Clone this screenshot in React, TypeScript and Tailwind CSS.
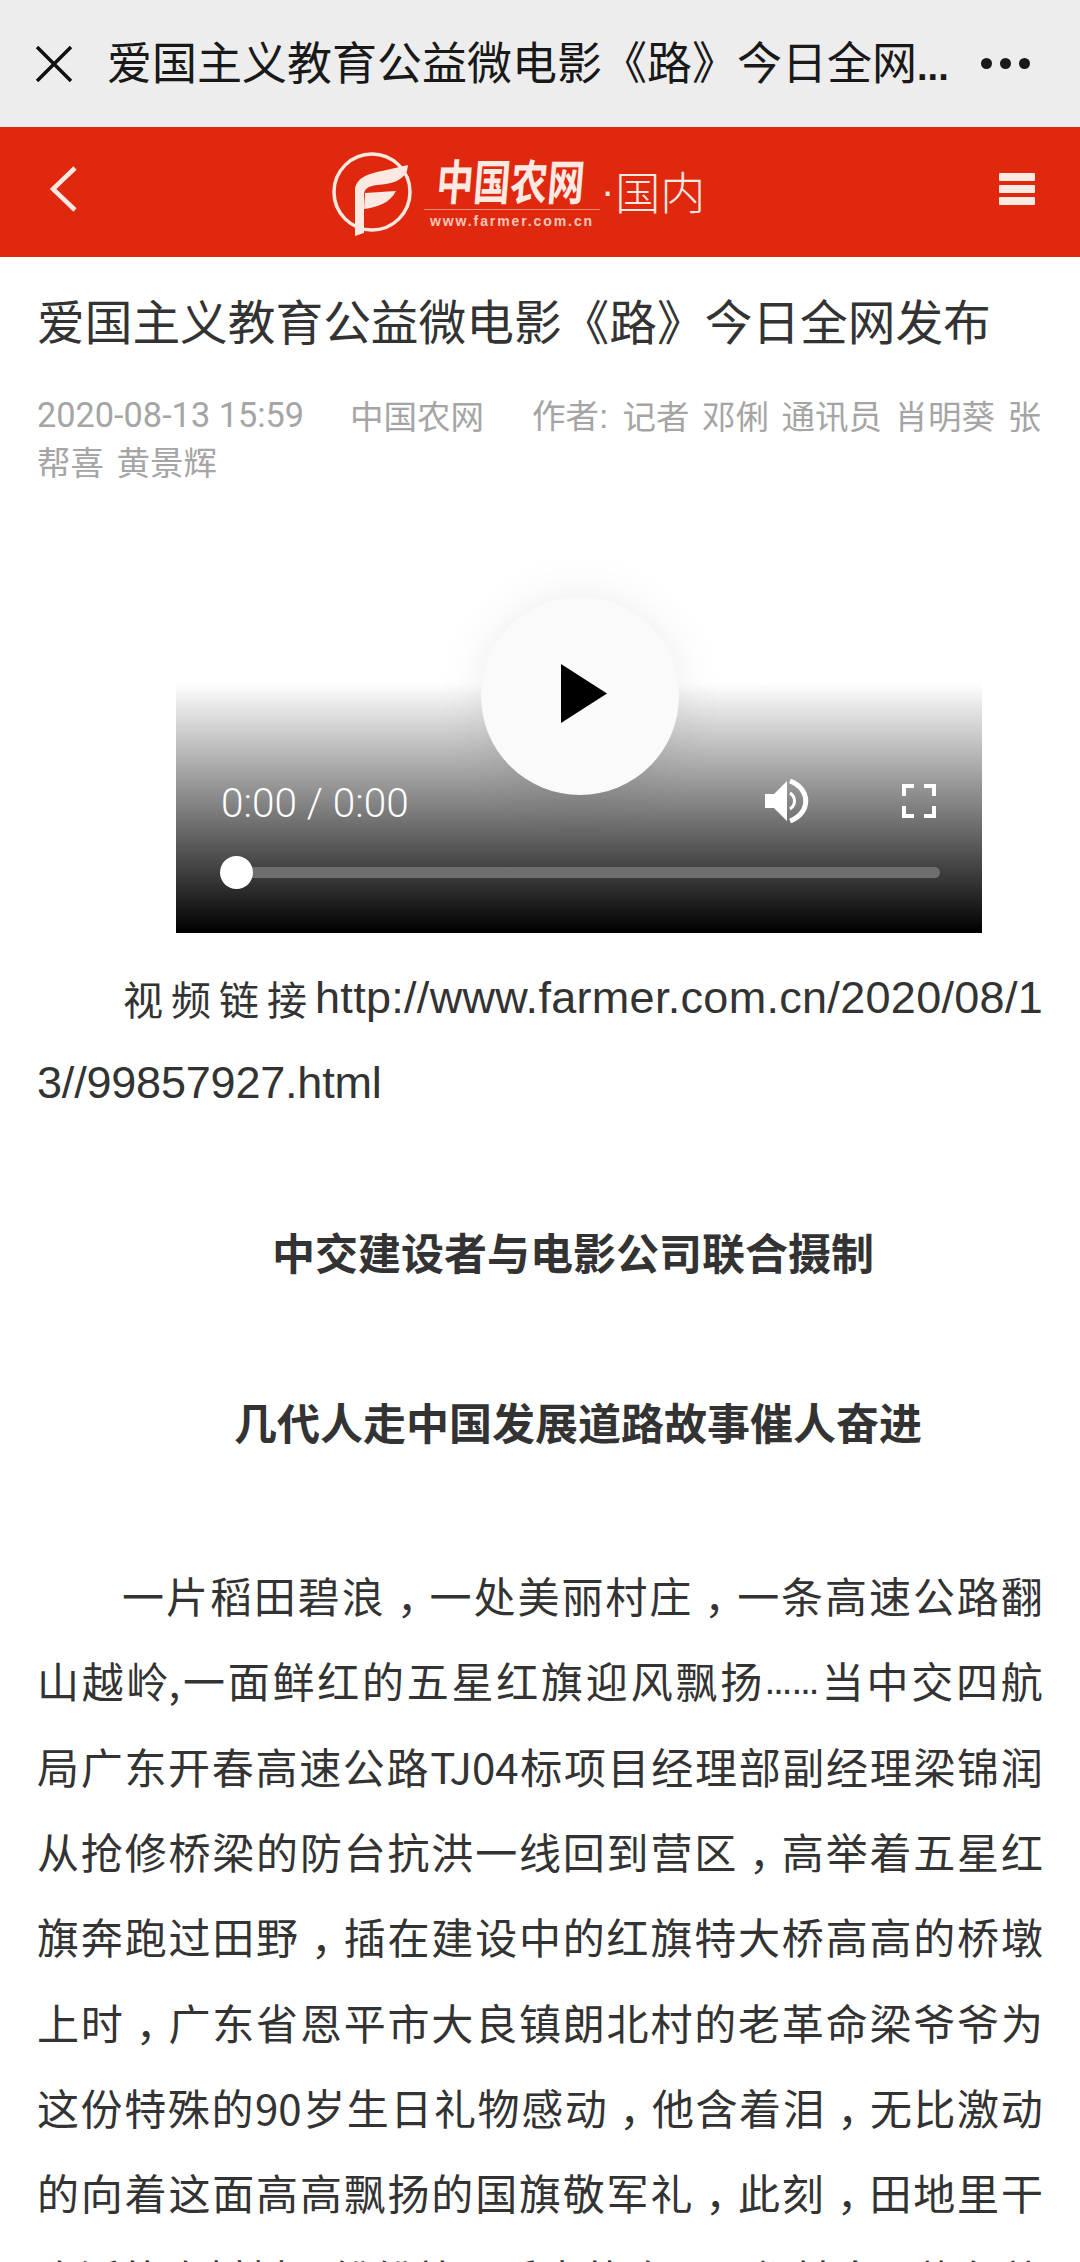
import React from "react";

const cjk = { fontFamily: '"Noto Sans CJK SC", sans-serif' };
const latin = { fontFamily: '"Liberation Sans", sans-serif' };
const tc = { fontFamily: '"Noto Sans CJK TC", sans-serif' };

function Logo() {
  return (
    <svg width="82" height="86" viewBox="0 0 82 86" className="shrink-0">
      <circle cx="40" cy="41" r="38" fill="none" stroke="#fbe9e2" strokeWidth="3.5" />
      <path d="M23 85 V40 C23 28 34 23 50 20 L76 14 L75 20 C70 30 60 33 45 34 C36 35 32 38 32 44 V82 Z" fill="#fbe9e2" />
      <path d="M33 42 L64 40 C58 52 46 56 32 58 Z" fill="#fbe9e2" />
    </svg>
  );
}

function Line({ text, first }: { text: string; first?: boolean }) {
  const tokens = text.match(/……|TJ04|90|.,|./gu) ?? [];
  return (
    <div className={first ? "h-[85.3px] flex items-center justify-between pl-[85px] whitespace-nowrap" : "h-[85.3px] flex items-center justify-between whitespace-nowrap"}>
      {tokens.map((c, j) =>
        c === "……" ? (
          <span key={j} className="text-[27px] font-bold self-center mt-[10px]" style={latin}>{c}</span>
        ) : c === "，" ? (
          <span key={j} className="translate-y-[13px]" style={tc}>{c}</span>
        ) : (
          <span key={j}>{c}</span>
        )
      )}
    </div>
  );
}

export default function App() {
  const paragraph = [
    "一片稻田碧浪，一处美丽村庄，一条高速公路翻",
    "山越岭,一面鲜红的五星红旗迎风飘扬……当中交四航",
    "局广东开春高速公路TJ04标项目经理部副经理梁锦润",
    "从抢修桥梁的防台抗洪一线回到营区，高举着五星红",
    "旗奔跑过田野，插在建设中的红旗特大桥高高的桥墩",
    "上时，广东省恩平市大良镇朗北村的老革命梁爷爷为",
    "这份特殊的90岁生日礼物感动，他含着泪，无比激动",
    "的向着这面高高飘扬的国旗敬军礼，此刻，田地里干",
    "农活的农村村民纷纷放下手中的农具，都转向国旗行礼",
  ];
  return (
    <div className="w-[1080px] h-[2262px] overflow-hidden bg-white" style={cjk}>
      <div className="h-[127px] bg-[#ededed] flex items-center pl-[36px] pr-[50px]">
        <svg width="36" height="36" viewBox="0 0 36 36" className="shrink-0">
          <path d="M1 1 L35 35 M35 1 L1 35" stroke="#111" strokeWidth="3.5" fill="none" />
        </svg>
        <div className="ml-[35px] text-[45px] leading-[60px] text-[#191919] whitespace-nowrap">
          爱国主义教育公益微电影《路》今日全网<span style={latin} className="font-bold text-[38px]">...</span>
        </div>
        <div className="ml-auto flex gap-[8px]">
          <div className="w-[11px] h-[11px] rounded-full bg-[#191919]" />
          <div className="w-[11px] h-[11px] rounded-full bg-[#191919]" />
          <div className="w-[11px] h-[11px] rounded-full bg-[#191919]" />
        </div>
      </div>
      <div className="h-[130px] bg-[#e0280f] flex items-center pl-[49px] pr-[45px]">
        <svg width="28" height="46" viewBox="0 0 28 46" className="mb-[6px] shrink-0">
          <path d="M26 2 L4 23 L26 44" stroke="#fbe9e2" strokeWidth="4.5" fill="none" />
        </svg>
        <div className="ml-[255px] flex items-start pt-[3px]">
          <Logo />
          <div className="flex flex-col ml-[23px]">
            <div className="h-[56px] flex items-center text-[37px] leading-[40px] font-bold text-[#fbe9e2] whitespace-nowrap origin-center scale-y-[1.3] -skew-x-6">中国农网</div>
            <div className="border-t border-[#f08a70] w-[176px] -ml-[13px] mt-[2px] pt-[5px] text-[14px] leading-[13px] font-bold tracking-[1.9px] text-[#f7c7b8] text-center whitespace-nowrap" style={latin}>www.farmer.com.cn</div>
          </div>
          <div className="mt-[15px] flex items-center text-[#fbe9e2] whitespace-nowrap">
            <span className="text-[40px] leading-[50px] ml-[1px]" style={latin}>·</span>
            <span className="text-[45px] leading-[50px] font-light ml-[1px]">国内</span>
          </div>
        </div>
        <div className="ml-auto flex flex-col gap-[4px] mb-[6px]">
          <div className="w-[36px] h-[8px] rounded-[1px] bg-[#fbe9e2]" />
          <div className="w-[36px] h-[8px] rounded-[1px] bg-[#fbe9e2]" />
          <div className="w-[36px] h-[8px] rounded-[1px] bg-[#fbe9e2]" />
        </div>
      </div>
      <div className="pl-[37px]">
        <h1 className="mt-[33px] text-[47.7px] leading-[60px] text-[#333] whitespace-nowrap">爱国主义教育公益微电影《路》今日全网发布</h1>
        <div className="mt-[42px] h-[46px] flex items-center text-[33.5px] leading-[46px] text-[#a5a5a5] whitespace-nowrap">
          <span style={{ fontFamily: '"Roboto", sans-serif' }} className="text-[34.3px]">2020-08-13 15:59</span>
          <span className="ml-[46px]">中国农网</span>
          <span className="ml-[48px]">作者<span style={latin}>:</span></span>
          <span className="ml-[14px] [word-spacing:5px]">记者 邓俐 通讯员 肖明葵 张</span>
        </div>
        <div className="h-[46px] flex items-center text-[33.5px] leading-[46px] text-[#a5a5a5] [word-spacing:5px]">帮喜 黄景辉</div>
      </div>
      <div className="relative ml-[176px] mt-[199px] w-[806px] h-[250px] bg-linear-to-b/srgb from-white to-black">
        <div className="absolute left-[305px] top-[-86px] w-[198px] h-[198px] rounded-full bg-[#fafafa] shadow-[0_0_50px_rgba(0,0,0,0.08)] flex items-center justify-center">
          <svg width="46" height="59" viewBox="0 0 46 59" className="ml-[7px] mb-[5px]"><path d="M0 0 L46 29.5 L0 59 Z" fill="#000" /></svg>
        </div>
        <div className="absolute left-[45px] top-[95px] text-[40.5px] leading-[50px] text-white font-light" style={{ fontFamily: '"Roboto", sans-serif' }}>0:00 / 0:00</div>
        <svg width="44" height="44" viewBox="0 0 44 44" className="absolute left-[589px] top-[96px]">
          <path d="M0 15 H9 L22 2 V42 L9 29 H0 Z" fill="#fff" />
          <path d="M25 14 C31 18 31 26 25 30" stroke="#fff" strokeWidth="3" fill="none" />
          <path d="M25 2 C46 10 46 34 25 42" stroke="#fff" strokeWidth="5" fill="none" />
        </svg>
        <svg width="34" height="34" viewBox="0 0 34 34" className="absolute left-[726px] top-[101px]">
          <path d="M2 12 V2 H12 M22 2 H32 V12 M32 22 V32 H22 M12 32 H2 V22" stroke="#fff" strokeWidth="4" fill="none" />
        </svg>
        <div className="absolute left-[60px] top-[184px] w-[704px] h-[11px] rounded-full bg-[#6e6e6e]" />
        <div className="absolute left-[44px] top-[173px] w-[33px] h-[33px] rounded-full bg-white" />
      </div>
      <div className="pl-[37px] pr-[37px] mt-[22px] text-[#333]">
        <div className="h-[85px] flex items-center pl-[86px] text-[40px] whitespace-nowrap">
          <span className="tracking-[8px]">视频链接</span>
          <span className="text-[45px] tracking-[0.3px]" style={latin}>http://www.farmer.com.cn/2020/08/1</span>
        </div>
        <div className="h-[85px] flex items-center text-[45px] tracking-[-0.2px] whitespace-nowrap" style={latin}>3//99857927.html</div>
        <p className="mt-[84px] pl-[66px] text-center text-[43px] leading-[85px] font-bold">中交建设者与电影公司联合摄制</p>
        <p className="mt-[85px] pl-[76px] text-center text-[43px] leading-[85px] font-bold">几代人走中国发展道路故事催人奋进</p>
        <div className="mt-[88px] text-[42px]">
          {paragraph.map((line, i) => (
            <Line key={i} text={line} first={i === 0} />
          ))}
        </div>
      </div>
    </div>
  );
}
